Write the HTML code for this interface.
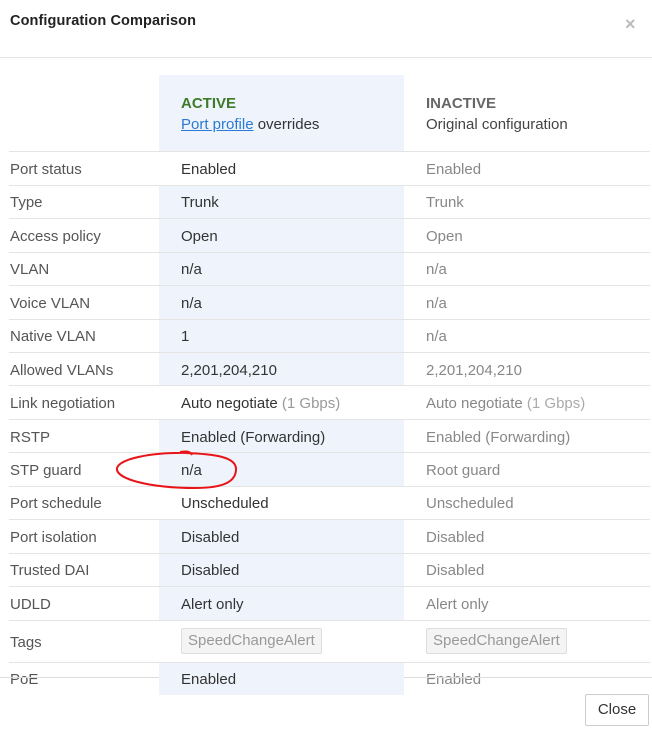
<!DOCTYPE html>
<html><head><meta charset="utf-8">
<style>
*{margin:0;padding:0;box-sizing:border-box}
body{width:652px;height:733px;background:#fff;font-family:"Liberation Sans",sans-serif;position:relative;overflow:hidden}
.title{position:absolute;left:10px;top:13px;font-size:14.5px;font-weight:bold;color:#222;letter-spacing:0.1px}
.x{position:absolute;left:625px;top:14px;font-size:18px;color:#bbb;font-weight:bold}
.hl{position:absolute;left:159px;width:245px;background:#eff4fc}
.line{position:absolute;height:1px;background:#e4e4e4}
.t{position:absolute;font-size:15px;line-height:18px;white-space:nowrap;margin-top:2px}
.l{left:10px;color:#555}
.a{left:181px;color:#333}
.i{left:426px;color:#888}
.g{color:#999}
.tag{position:absolute;top:628px;height:26px;border:1px solid #ddd;background:#f4f4f4;border-radius:2px;color:#999;font-size:15px;line-height:24px;padding:0 6px}
.btn{position:absolute;left:585px;top:694px;width:64px;height:32px;border:1px solid #ccc;border-radius:2px;background:#fff;font-size:15px;color:#333;text-align:center;line-height:30px}
</style></head><body>
<div class="title">Configuration Comparison</div>
<div class="x">×</div>
<div class="line" style="left:0;top:57px;width:652px"></div>

<div class="hl" style="top:75px;height:76px"></div>
<div class="hl" style="top:185px;height:200px"></div>
<div class="hl" style="top:419px;height:67px"></div>
<div class="hl" style="top:519px;height:101px"></div>
<div class="hl" style="top:662px;height:33px"></div>

<div class="t" style="left:181px;top:93px;font-weight:bold;color:#3f7a2a">ACTIVE</div>
<div class="t" style="left:181px;top:114px;color:#333"><span style="color:#2a7ad5;text-decoration:underline">Port profile</span> overrides</div>
<div class="t" style="left:426px;top:93px;font-weight:bold;color:#666">INACTIVE</div>
<div class="t" style="left:426px;top:114px;color:#444">Original configuration</div>

<div class="line" style="left:9px;top:151px;width:641px"></div>
<div class="line" style="left:9px;top:185px;width:641px"></div>
<div class="line" style="left:9px;top:218px;width:641px"></div>
<div class="line" style="left:9px;top:252px;width:641px"></div>
<div class="line" style="left:9px;top:285px;width:641px"></div>
<div class="line" style="left:9px;top:319px;width:641px"></div>
<div class="line" style="left:9px;top:352px;width:641px"></div>
<div class="line" style="left:9px;top:385px;width:641px"></div>
<div class="line" style="left:9px;top:419px;width:641px"></div>
<div class="line" style="left:9px;top:452px;width:641px"></div>
<div class="line" style="left:9px;top:486px;width:641px"></div>
<div class="line" style="left:9px;top:519px;width:641px"></div>
<div class="line" style="left:9px;top:553px;width:641px"></div>
<div class="line" style="left:9px;top:586px;width:641px"></div>
<div class="line" style="left:9px;top:620px;width:641px"></div>
<div class="line" style="left:9px;top:662px;width:641px"></div>

<div class="t l" style="top:159px">Port status</div><div class="t a" style="top:159px">Enabled</div><div class="t i" style="top:159px">Enabled</div>
<div class="t l" style="top:192px">Type</div><div class="t a" style="top:192px">Trunk</div><div class="t i" style="top:192px">Trunk</div>
<div class="t l" style="top:226px">Access policy</div><div class="t a" style="top:226px">Open</div><div class="t i" style="top:226px">Open</div>
<div class="t l" style="top:259px">VLAN</div><div class="t a" style="top:259px">n/a</div><div class="t i" style="top:259px">n/a</div>
<div class="t l" style="top:293px">Voice VLAN</div><div class="t a" style="top:293px">n/a</div><div class="t i" style="top:293px">n/a</div>
<div class="t l" style="top:326px">Native VLAN</div><div class="t a" style="top:326px">1</div><div class="t i" style="top:326px">n/a</div>
<div class="t l" style="top:360px">Allowed VLANs</div><div class="t a" style="top:360px">2,201,204,210</div><div class="t i" style="top:360px">2,201,204,210</div>
<div class="t l" style="top:393px">Link negotiation</div><div class="t a" style="top:393px">Auto negotiate <span class="g">(1 Gbps)</span></div><div class="t i" style="top:393px">Auto negotiate <span style="color:#aaa">(1 Gbps)</span></div>
<div class="t l" style="top:427px">RSTP</div><div class="t a" style="top:427px">Enabled (Forwarding)</div><div class="t i" style="top:427px">Enabled (Forwarding)</div>
<div class="t l" style="top:460px">STP guard</div><div class="t a" style="top:460px">n/a</div><div class="t i" style="top:460px">Root guard</div>
<div class="t l" style="top:493px">Port schedule</div><div class="t a" style="top:493px">Unscheduled</div><div class="t i" style="top:493px">Unscheduled</div>
<div class="t l" style="top:527px">Port isolation</div><div class="t a" style="top:527px">Disabled</div><div class="t i" style="top:527px">Disabled</div>
<div class="t l" style="top:560px">Trusted DAI</div><div class="t a" style="top:560px">Disabled</div><div class="t i" style="top:560px">Disabled</div>
<div class="t l" style="top:594px">UDLD</div><div class="t a" style="top:594px">Alert only</div><div class="t i" style="top:594px">Alert only</div>
<div class="t l" style="top:632px">Tags</div>
<div class="tag" style="left:181px">SpeedChangeAlert</div>
<div class="tag" style="left:426px">SpeedChangeAlert</div>
<div class="t l" style="top:669px">PoE</div><div class="t a" style="top:669px">Enabled</div><div class="t i" style="top:669px">Enabled</div>

<div class="line" style="left:0;top:677px;width:159px;background:#ddd"></div>
<div class="line" style="left:404px;top:677px;width:248px;background:#ddd"></div>

<div class="btn">Close</div>

<svg style="position:absolute;left:0;top:0" width="652" height="733">
<path d="M190 453 C150 452,120 459,117 468 C115 479,150 488,195 488 C225 488,236 481,236 469 C236 457,215 454,185 453 M180 452 C186 451,190 451,192 455" fill="none" stroke="#e8141a" stroke-width="2"/>
</svg>
</body></html>
